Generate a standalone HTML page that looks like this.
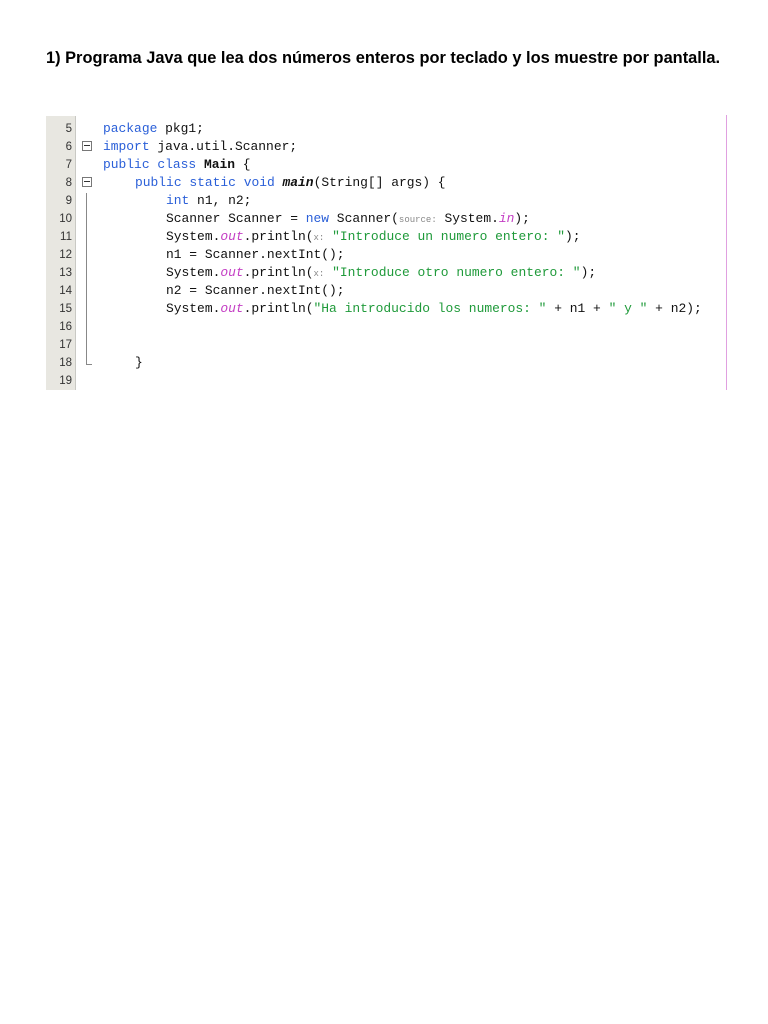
<!DOCTYPE html>
<html><head><meta charset="utf-8"><style>
body{margin:0;background:#fff;width:768px;height:1024px;position:relative;overflow:hidden}
h1{position:absolute;left:46px;top:49px;margin:0;font:bold 16.4px "Liberation Sans",sans-serif;color:#000;white-space:nowrap}
.gut{position:absolute;left:46px;top:116px;width:29px;height:274px;background:#e8e7e1;border-right:1px solid #c9c9c4}
.code{position:absolute;left:0;top:120px;font:12.95px "Liberation Mono",monospace;color:#111}
.l{position:absolute;height:18px;line-height:18px;white-space:pre}
.n{position:absolute;width:26px;text-align:right;left:46px;font:11.5px "Liberation Sans",sans-serif;color:#333;line-height:18px}
.k{color:#2a5fd8}.s{color:#1f9a3a}.o{color:#c43ec4;font-style:italic}.h{color:#888;font-size:9px}
.fold{position:absolute;left:82px;width:8px;height:8px;border:1px solid #777;background:#fff}
.fold:after{content:"";position:absolute;left:1px;top:3px;width:6px;height:1px;background:#333}
.mag{position:absolute;left:726px;top:115px;width:1px;height:275px;background:#e0a0e0}
</style></head><body>
<h1>1) Programa Java que lea dos números enteros por teclado y los muestre por pantalla.</h1>
<div class="gut"></div>
<div class="mag"></div>
<div style="position:absolute;left:86px;top:193px;width:1px;height:172px;background:#888"></div>
<div style="position:absolute;left:86px;top:364px;width:6px;height:1px;background:#888"></div>
<div class="fold" style="top:141px"></div>
<div class="fold" style="top:177px"></div>
<div class="code">
<div class="n" style="top:0">5</div><div class="l" style="left:103px;top:0"><span class="k">package</span> pkg1;</div>
<div class="n" style="top:18px">6</div><div class="l" style="left:103px;top:18px"><span class="k">import</span> java.util.Scanner;</div>
<div class="n" style="top:36px">7</div><div class="l" style="left:103px;top:36px"><span class="k">public class</span> <b>Main</b> {</div>
<div class="n" style="top:54px">8</div><div class="l" style="left:135px;top:54px"><span class="k">public static void</span> <b><i>main</i></b>(String[] args) {</div>
<div class="n" style="top:72px">9</div><div class="l" style="left:166px;top:72px"><span class="k">int</span> n1, n2;</div>
<div class="n" style="top:90px">10</div><div class="l" style="left:166px;top:90px">Scanner Scanner = <span class="k">new</span> Scanner(<span class="h">source:</span> System.<span class="o">in</span>);</div>
<div class="n" style="top:108px">11</div><div class="l" style="left:166px;top:108px">System.<span class="o">out</span>.println(<span class="h">x:</span> <span class="s">"Introduce un numero entero: "</span>);</div>
<div class="n" style="top:126px">12</div><div class="l" style="left:166px;top:126px">n1 = Scanner.nextInt();</div>
<div class="n" style="top:144px">13</div><div class="l" style="left:166px;top:144px">System.<span class="o">out</span>.println(<span class="h">x:</span> <span class="s">"Introduce otro numero entero: "</span>);</div>
<div class="n" style="top:162px">14</div><div class="l" style="left:166px;top:162px">n2 = Scanner.nextInt();</div>
<div class="n" style="top:180px">15</div><div class="l" style="left:166px;top:180px">System.<span class="o">out</span>.println(<span class="s">"Ha introducido los numeros: "</span> + n1 + <span class="s">" y "</span> + n2);</div>
<div class="n" style="top:198px">16</div>
<div class="n" style="top:216px">17</div>
<div class="n" style="top:234px">18</div><div class="l" style="left:135px;top:234px">}</div>
<div class="n" style="top:252px">19</div>
</div>
</body></html>
